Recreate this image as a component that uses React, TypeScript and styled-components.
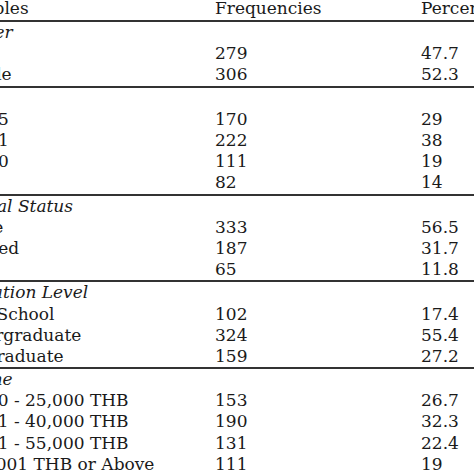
import styled, { createGlobalStyle } from "styled-components"

const GlobalStyle = createGlobalStyle`
  html, body {
    margin: 0;
    padding: 0;
    background: #ffffff;
    overflow: hidden;
  }
  body {
    font-family: "DejaVu Serif", "Liberation Serif", serif;
    color: #1a1a1a;
  }
`

const Page = styled.div`
  width: 474px;
  height: 474px;
  overflow: hidden;
`

// the screenshot is cropped on the left, so the table starts off-screen
const Table = styled.div`
  margin-left: -51px;
  width: 580px;
  font-size: 17px;
`

const Row = styled.div`
  display: grid;
  grid-template-columns: 266px 206px 1fr;
  height: 21.2px;
  align-items: center;
  line-height: 1;
  white-space: nowrap;
`

const HeaderRow = styled(Row)`
  box-sizing: border-box;
  height: 22px;
  padding-bottom: 3px;
  align-items: end;
  border-bottom: 2px solid #333333;
`

const Section = styled.div<{ $ruled: boolean }>`
  border-bottom: ${({ $ruled }) => ($ruled ? "2px solid #333333" : "none")};
`

const Cell = styled.div``

const GroupLabel = styled(Cell)`
  font-style: italic;
`

type Group = {
  name: string
  rows: [string, number, number][]
}

const groups: Group[] = [
  {
    name: "Gender",
    rows: [
      ["Male", 279, 47.7],
      ["Female", 306, 52.3],
    ],
  },
  {
    name: "Age",
    rows: [
      ["18 - 25", 170, 29],
      ["26 - 31", 222, 38],
      ["32 - 40", 111, 19],
      ["41+", 82, 14],
    ],
  },
  {
    name: "Marital Status",
    rows: [
      ["Single", 333, 56.5],
      ["Married", 187, 31.7],
      ["Other", 65, 11.8],
    ],
  },
  {
    name: "Education Level",
    rows: [
      ["High School", 102, 17.4],
      ["Undergraduate", 324, 55.4],
      ["Postgraduate", 159, 27.2],
    ],
  },
  {
    name: "Income",
    rows: [
      ["10,000 - 25,000 THB", 153, 26.7],
      ["25,001 - 40,000 THB", 190, 32.3],
      ["40,001 - 55,000 THB", 131, 22.4],
      ["≥ 55,001 THB or Above", 111, 19],
    ],
  },
]

export default function App() {
  return (
    <Page>
      <GlobalStyle />
      <Table>
        <HeaderRow>
          <Cell>Variables</Cell>
          <Cell>Frequencies</Cell>
          <Cell>Percentage</Cell>
        </HeaderRow>
        {groups.map((g, i) => (
          <Section key={g.name} $ruled={i < groups.length - 1}>
            <Row>
              <GroupLabel>{g.name}</GroupLabel>
              <Cell />
              <Cell />
            </Row>
            {g.rows.map(([label, freq, pct]) => (
              <Row key={label}>
                <Cell>{label}</Cell>
                <Cell>{freq}</Cell>
                <Cell>{pct}</Cell>
              </Row>
            ))}
          </Section>
        ))}
      </Table>
    </Page>
  )
}
